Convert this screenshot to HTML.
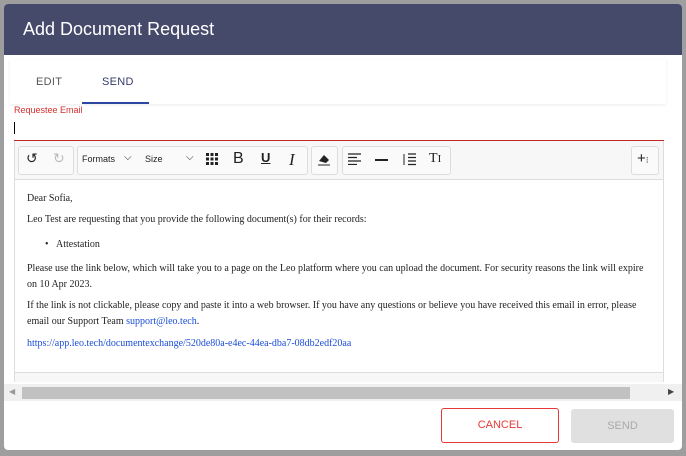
<!DOCTYPE html>
<html><head><style>
*{box-sizing:border-box;margin:0;padding:0}
body{width:686px;height:456px;background:#9e9e9e;position:relative;overflow:hidden;font-family:"Liberation Sans",sans-serif}
.dlg{position:absolute;left:4px;top:4px;width:678px;height:446px;background:#fff;border-radius:4px;overflow:hidden}
.hdr{height:51px;background:#454a6b;color:#fff;font-size:18px;padding:15px 0 0 19px}
.tabs{position:absolute;left:10px;top:60px;width:656px;height:44px;box-shadow:0 1px 3px rgba(0,0,0,.08)}
.tab{position:absolute;top:16px;font-size:11px;letter-spacing:.3px}
.abs{position:absolute}
.tb{position:absolute;top:146px;height:29px;border:1px solid #ddd;border-radius:3px;background:#fafafa}
.ic{position:absolute;top:150px;font-size:15px;color:#222}
.c{position:absolute;left:27px;font-family:"Liberation Serif",serif;font-size:10px;color:#222}
a{color:#1a4ed8;text-decoration:none}
</style></head><body>
<div class="dlg">
<div class="hdr">Add Document Request</div>
</div>
<div class="tabs"><span class="tab" style="left:26px;color:#555">EDIT</span><span class="tab" style="left:92px;color:#333a6b">SEND</span>
<div class="abs" style="left:72px;top:42px;width:67px;height:2px;background:#2b47a0"></div></div>
<div class="abs" style="left:14px;top:105px;font-size:9px;color:#d32f2f">Requestee Email</div>
<div class="abs" style="left:14px;top:122px;width:1px;height:12px;background:#000"></div>
<div class="abs" style="left:14px;top:140px;width:650px;height:1px;background:#c62828"></div>
<div class="abs" style="left:14px;top:141px;width:650px;height:241px;border:1px solid #ddd;border-top:none"></div>
<div class="abs" style="left:15px;top:141px;width:648px;height:39px;background:#f7f7f7;border-bottom:1px solid #ddd"></div>
<div class="tb" style="left:18px;width:56px"></div>
<div class="tb" style="left:77px;width:231px"></div>
<div class="tb" style="left:311px;width:27px"></div>
<div class="tb" style="left:342px;width:109px"></div>
<div class="tb" style="left:631px;width:28px"></div>
<span class="ic" style="left:26px;font-size:14px">↺</span>
<span class="ic" style="left:53px;font-size:14px;color:#bbb">↻</span>
<span class="ic" style="left:82px;top:154px;font-size:9px">Formats</span>
<span class="ic" style="left:124px;top:152px;font-size:10px">⌵</span>
<span class="ic" style="left:145px;top:154px;font-size:9px">Size</span>
<span class="ic" style="left:186px;top:152px;font-size:10px">⌵</span>
<svg class="abs" style="left:206px;top:153px" width="12" height="12"><g fill="#222"><rect x="0" y="0" width="3" height="3"/><rect x="4.5" y="0" width="3" height="3"/><rect x="9" y="0" width="3" height="3"/><rect x="0" y="4.5" width="3" height="3"/><rect x="4.5" y="4.5" width="3" height="3"/><rect x="9" y="4.5" width="3" height="3"/><rect x="0" y="9" width="3" height="3"/><rect x="4.5" y="9" width="3" height="3"/><rect x="9" y="9" width="3" height="3"/></g></svg>
<span class="ic" style="left:233px;font-size:16px">B</span>
<span class="ic" style="left:261px;font-size:13px;text-decoration:underline;font-weight:bold">U</span>
<span class="ic" style="left:289px;font-family:'Liberation Serif',serif;font-style:italic;font-size:17px">I</span>
<svg class="abs" style="left:317px;top:152px" width="14" height="14"><path d="M2 9 L7 3 L12 8 L9 11 Z" fill="#222"/><path d="M1 13h12" stroke="#222"/></svg>
<svg class="abs" style="left:348px;top:153px" width="14" height="12"><path d="M0 1h13M0 4.5h9M0 8h13M0 11.5h9" stroke="#222" stroke-width="1.3"/></svg>
<div class="abs" style="left:375px;top:159px;width:13px;height:2px;background:#222"></div>
<svg class="abs" style="left:403px;top:153px" width="13" height="13"><path d="M5 1h8M5 4.5h8M5 8h8M5 11.5h8" stroke="#222" stroke-width="1.3"/><path d="M1 1v11" stroke="#222"/></svg>
<span class="ic" style="left:429px;top:151px;font-family:'Liberation Serif',serif;font-size:14px">T<span style="font-size:11px">I</span></span>
<span class="ic" style="left:637px;top:150px;font-size:15px">+<span style="font-size:9px">⁝</span></span>
<div class="c" style="top:193px">Dear Sofia,</div>
<div class="c" style="top:214px">Leo Test are requesting that you provide the following document(s) for their records:</div>
<div class="c" style="top:239px;left:45px">•&nbsp;&nbsp;&nbsp;Attestation</div>
<div class="c" style="top:263px">Please use the link below, which will take you to a page on the Leo platform where you can upload the document. For security reasons the link will expire</div>
<div class="c" style="top:279px">on 10 Apr 2023.</div>
<div class="c" style="top:300px">If the link is not clickable, please copy and paste it into a web browser. If you have any questions or believe you have received this email in error, please</div>
<div class="c" style="top:316px">email our Support Team <a>support@leo.tech</a>.</div>
<div class="c" style="top:338px"><a>https://app.leo.tech/documentexchange/520de80a-e4ec-44ea-dba7-08db2edf20aa</a></div>
<div class="abs" style="left:15px;top:372px;width:648px;height:10px;background:#f7f7f7;border-top:1px solid #ddd"></div>
<div class="abs" style="left:4px;top:384px;width:678px;height:17px;background:#f0f0f0"></div>
<div class="abs" style="left:22px;top:387px;width:608px;height:12px;background:#c1c1c1"></div>
<span class="abs" style="left:9px;top:387px;font-size:8px;color:#999">◀</span>
<span class="abs" style="left:668px;top:387px;font-size:8px;color:#444">▶</span>
<div class="abs" style="left:441px;top:408px;width:118px;height:35px;border:1px solid #e53935;border-radius:3px;color:#e53935;font-size:11px;text-align:center;line-height:33px">CANCEL</div>
<div class="abs" style="left:571px;top:409px;width:103px;height:34px;background:#e0e0e0;border-radius:3px;color:#aaa;font-size:11px;text-align:center;line-height:34px">SEND</div>
</body></html>
